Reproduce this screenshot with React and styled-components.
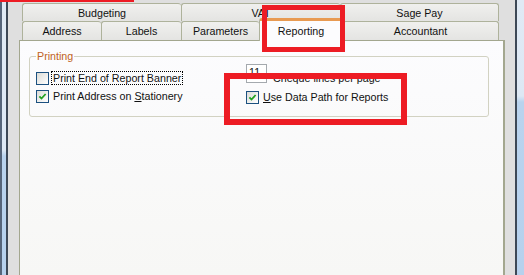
import React from 'react';
import styled, { createGlobalStyle } from 'styled-components';

const GlobalStyle = createGlobalStyle`
  html, body {
    margin: 0;
    padding: 0;
    background: #dfdfdf;
  }
`;

// Whole dialog crop
const Window = styled.div`
  position: relative;
  width: 524px;
  height: 275px;
  display: flex;
  overflow: hidden;
  font-family: "Liberation Sans", Arial, sans-serif;
  font-size: 10.7px;
  color: #111;
`;

const LeftFrame = styled.div`
  width: 8px;
  box-sizing: border-box;
  border-left: 2px solid #56657a;
  border-right: 2px solid #3d4856;
  background: linear-gradient(#e0eaf5 0, #dde8f4 150px, #b9d3ee 156px, #b6d1ed 100%);
`;

const RightFrame = styled.div`
  width: 9px;
  box-sizing: border-box;
  border-left: 2px solid #3d4856;
  background: linear-gradient(#e0eaf5 0, #dde8f4 96px, #b9d3ee 102px, #b6d1ed 100%);
`;

const Client = styled.div`
  width: 507px;
  display: flex;
  flex-direction: column;
  padding-top: 3px;
  box-sizing: border-box;
  background: #dfdfdf;
`;

const TabRow = styled.div`
  display: flex;
  margin-left: 14px;
  height: ${p => p.$h}px;
`;

const Tab = styled.div`
  position: relative;
  width: ${p => p.$w}px;
  box-sizing: border-box;
  display: flex;
  align-items: center;
  justify-content: center;
  background: linear-gradient(#f0f0ee, #e4e4e2);
  border-top: 1px solid #aeb29b;
  border-left: ${p => (p.$noLeft ? 'none' : '1px solid #aeb29b')};
  border-right: ${p => (p.$last ? '1px solid #aeb29b' : 'none')};
  border-radius: 3px 3px 0 0;
  white-space: nowrap;
`;

const ActiveTab = styled.div`
  position: relative;
  z-index: 2;
  width: ${p => p.$w}px;
  height: 23px;
  margin-top: -3px;
  box-sizing: border-box;
  display: flex;
  align-items: center;
  justify-content: center;
  padding-bottom: 1px;
  background: #fcfcfe;
  border-top: 3px solid #e89a52;
  border-left: 1px solid #aeb29b;
  border-right: 1px solid #aeb29b;
  border-radius: 3px 3px 0 0;
  white-space: nowrap;
`;

const Panel = styled.div`
  flex: 1;
  width: 486px;
  margin-left: 11px;
  box-sizing: border-box;
  padding: 9px 0 0 9px;
  border: 1px solid #a3a78f;
  border-right: 2px solid #a3a78f;
  border-bottom: none;
  background: linear-gradient(#fcfcfe, #f7f7f5);
`;

const GroupBox = styled.fieldset`
  width: 460px;
  box-sizing: border-box;
  margin: 0;
  padding: 0 0 12px 0;
  min-width: 0;
  border: 1px solid #d2d2c2;
  border-radius: 3px;
`;

const Legend = styled.legend`
  margin-left: 6px;
  padding: 0 1px;
  line-height: 13px;
  color: #c0621c;
`;

const GroupBody = styled.div`
  display: grid;
  grid-template-columns: 210px 1fr;
  padding-left: 6px;
`;

const Column = styled.div`
  display: flex;
  flex-direction: column;
  gap: ${p => p.$gap}px;
  padding-top: ${p => p.$top}px;
`;

const CheckRow = styled.div`
  display: flex;
  align-items: center;
  gap: 2px;
  height: 14px;
`;

const Box = styled.span`
  width: 13px;
  height: 13px;
  box-sizing: border-box;
  border: 1px solid #1c5180;
  background: linear-gradient(135deg, #dcdcd7, #ffffff);
  display: flex;
  align-items: center;
  justify-content: center;
`;

const Label = styled.span`
  border: 1px dotted ${p => (p.$focus ? '#000' : 'transparent')};
  padding: 0 1px;
  line-height: 12px;
  white-space: nowrap;
`;

const Key = styled.span`
  text-decoration: underline;
`;

const SpinRow = styled.div`
  display: flex;
  align-items: flex-end;
  height: 19px;
`;

const NumberBox = styled.div`
  width: 21px;
  height: 19px;
  box-sizing: border-box;
  border: 1px solid #a4a9ae;
  background: #fff;
  padding: 1px 2px;
  line-height: 13px;
`;

const SpinLabel = styled.span`
  margin-left: 6px;
  margin-bottom: -2px;
  line-height: 13px;
  white-space: nowrap;
`;

// red annotation marks drawn over the screenshot
const Mark = styled.div`
  position: absolute;
  left: ${p => p.$x}px;
  top: ${p => p.$y}px;
  width: ${p => p.$w}px;
  height: ${p => p.$h}px;
  box-sizing: border-box;
  border: ${p => p.$t}px solid #ed1c24;
  z-index: 5;
  pointer-events: none;
`;

const TopBar = styled.div`
  position: absolute;
  left: 0;
  top: 0;
  width: 134px;
  height: 2px;
  background: #ed1c24;
  z-index: 5;
`;

const Check = ({ checked }) => (
  <Box>
    {checked && (
      <svg width="9" height="9" viewBox="0 0 9 9">
        <path d="M1.4 4.3 L3.5 6.5 L7.6 2" fill="none" stroke="#21a121" strokeWidth="1.8" />
      </svg>
    )}
  </Box>
);

const topTabs = ['Budgeting', 'VAT', 'Sage Pay'];

const App = () => (
  <>
    <GlobalStyle />
    <Window>
      <LeftFrame />
      <Client>
        <TabRow $h={18}>
          {topTabs.map((t, i) => (
            <Tab key={t} $w={159} $last={i === topTabs.length - 1}>{t}</Tab>
          ))}
        </TabRow>
        <TabRow $h={19}>
          <Tab $w={79}>Address</Tab>
          <Tab $w={80}>Labels</Tab>
          <Tab $w={78}>Parameters</Tab>
          <ActiveTab $w={84}>Reporting</ActiveTab>
          <Tab $w={156} $noLeft $last>Accountant</Tab>
        </TabRow>
        <Panel>
          <GroupBox>
            <Legend>Printing</Legend>
            <GroupBody>
              <Column $gap={4} $top={8}>
                <CheckRow>
                  <Check />
                  <Label $focus>Print End of Report Banner</Label>
                </CheckRow>
                <CheckRow>
                  <Check checked />
                  <Label>Print Address on <Key>S</Key>tationery</Label>
                </CheckRow>
              </Column>
              <Column $gap={7} $top={1}>
                <SpinRow>
                  <NumberBox>11</NumberBox>
                  <SpinLabel>Cheque lines per page</SpinLabel>
                </SpinRow>
                <CheckRow>
                  <Check checked />
                  <Label><Key>U</Key>se Data Path for Reports</Label>
                </CheckRow>
              </Column>
            </GroupBody>
          </GroupBox>
        </Panel>
      </Client>
      <RightFrame />
      <TopBar />
      <Mark $x={262} $y={5} $w={83} $h={47} $t={5} />
      <Mark $x={224} $y={73} $w={183} $h={52} $t={6} />
    </Window>
  </>
);

export default App;
